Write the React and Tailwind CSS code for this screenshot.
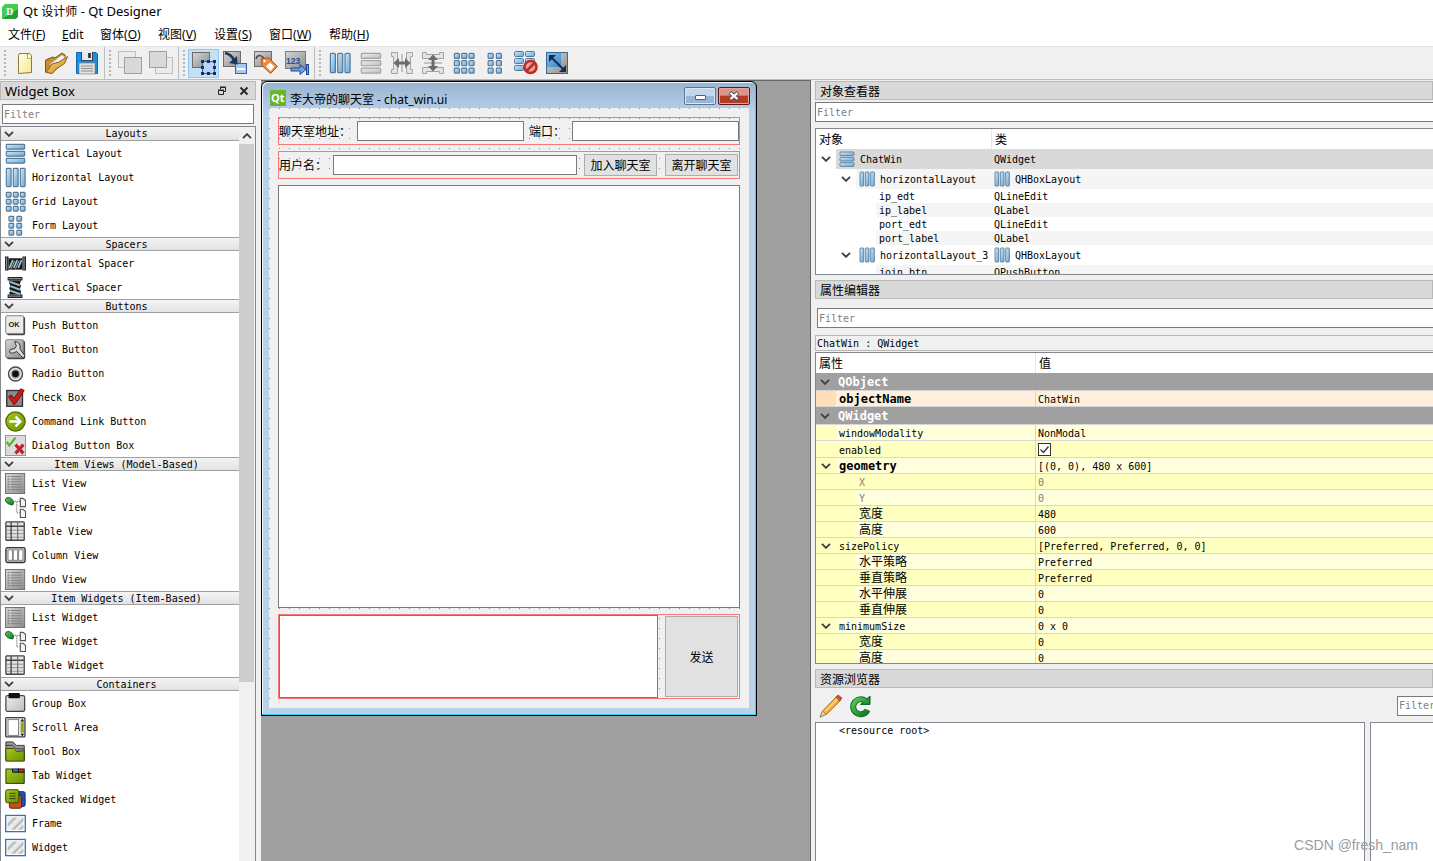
import React from 'react';

const MONO = 'font-["DejaVu_Sans_Mono","Noto_Sans_CJK_SC",monospace] text-[10px]';
const UI = 'font-["Noto_Sans","Noto_Sans_CJK_SC",sans-serif] text-[12px]';
const SONG = 'font-["Noto_Sans_CJK_SC",sans-serif] text-[12px]';

// Shared gradients, referenced by id from every icon
function Gradients() {
  const list = [
    ['gBlue', '#cdecfc', '#64a6d8'],
    ['gGray', '#eeeeee', '#bdbdbd'],
    ['gDark', '#d6d6d6', '#8c8c8c'],
    ['gYellow', '#fffef0', '#f6e88c'],
    ['gGold', '#fbd277', '#cf8f1e'],
    ['gGreen', '#a4c81c', '#6d9000'],
    ['gLeaf', '#5cc860', '#0d7a22'],
    ['gSky', '#7fc0ea', '#3f86c4'],
  ];
  return (
    <svg className="absolute size-0" aria-hidden="true">
      <defs>
        {list.map(([id, a, b]) => (
          <linearGradient key={id} id={id} x1="0" y1="0" x2="1" y2="1">
            <stop offset="0" stopColor={a} />
            <stop offset="1" stopColor={b} />
          </linearGradient>
        ))}
      </defs>
    </svg>
  );
}

function Svg({ className = 'size-6', children }) {
  return (
    <svg viewBox="0 0 24 24" className={`${className} shrink-0`} fill="none" aria-hidden="true">
      {children}
    </svg>
  );
}

/* ---------- layout icons ---------- */

const STEEL = '#5a7896';

function RowsIcon({ className, fill = 'url(#gBlue)', stroke = STEEL }) {
  return (
    <Svg className={className}>
      {[1, 9, 17].map((y) => (
        <rect key={y} x="1.500" y={y + 0.5} width="21" height="5.500" rx="1" fill={fill} stroke={stroke} strokeWidth="1.300" />
      ))}
    </Svg>
  );
}

function ColsIcon({ className }) {
  return (
    <Svg className={className}>
      {[1, 9, 17].map((x) => (
        <rect key={x} x={x + 0.5} y="1.500" width="5.500" height="21" rx="1" fill="url(#gBlue)" stroke={STEEL} strokeWidth="1.300" />
      ))}
    </Svg>
  );
}

function CellsIcon({ className, cols }) {
  return (
    <Svg className={className}>
      {cols.map((x) =>
        [1, 9, 17].map((y) => (
          <rect key={`${x}-${y}`} x={x + 0.5} y={y + 0.5} width="5.500" height="5.500" rx="1" fill="url(#gBlue)" stroke={STEEL} strokeWidth="1.300" />
        ))
      )}
    </Svg>
  );
}

const GridIcon = ({ className }) => <CellsIcon className={className} cols={[1, 9, 17]} />;
const FormIcon = ({ className }) => <CellsIcon className={className} cols={[4, 13]} />;

/* ---------- toolbar icons ---------- */

function NewIcon() {
  return (
    <Svg>
      <path d="M7 2.500h9.500L18.500 4.500V21.500L5.500 22.500V4.500Q5.500 2.500 7 2.500Z" fill="url(#gYellow)" stroke="#8a7a3c" />
      <path d="M14.500 3v4.500h4" fill="#fff" stroke="#b8a85a" />
    </Svg>
  );
}

function OpenIcon() {
  return (
    <Svg>
      <path d="M1.500 21V9L9 6l2 1 7-5 3 2v6L8 22Z" fill="#c98f2a" stroke="#7a5411" />
      <path d="M6 13 18 4l3 2-1 4-11 8Z" fill="#f4f4f4" stroke="#a7a7a7" strokeWidth=".6" />
      <path d="M2 21.500 8 13l7-2 8.500-5.500-3 7-9 6-3 4Z" fill="url(#gGold)" stroke="#8a6114" />
    </Svg>
  );
}

function SaveIcon() {
  return (
    <Svg>
      <path d="M1.500 1.500H21L22.500 3V22.500H1.500Z" fill="#1b91e4" stroke="#0c68b4" />
      <rect x="6" y="1" width="12" height="9" fill="#3c4350" />
      <rect x="7" y="1" width="10" height="8" fill="#e8e8e8" />
      <rect x="13" y="2" width="3" height="5" fill="#3c4350" />
      <rect x="4" y="12" width="16" height="11" fill="#e0e0e0" stroke="#777" strokeWidth=".6" />
      <path d="M6 15h12M6 17.500h12M6 20h12" stroke="#8f8f8f" />
    </Svg>
  );
}

function RaiseIcon({ back }) {
  return (
    <Svg>
      <rect x={back ? 6.5 : 0.5} y={back ? 6.5 : 0.5} width="17" height="16" fill="#ececec" stroke="#bdbdbd" />
      <rect x={back ? 0.5 : 6.5} y={back ? 0.5 : 6.5} width="17" height="16" fill="#d9d9d9" stroke="#9f9f9f" />
    </Svg>
  );
}

function EditWidgetsIcon() {
  return (
    <Svg>
      <rect x=".5" y="1.500" width="17" height="15" fill="url(#gDark)" stroke="#6d6d6d" />
      <rect x="10.500" y="10.500" width="12" height="12" fill="#b9d2f8" stroke="#3f5f96" />
      <path d="M9 9h3v3H9zM15 9h3v3h-3zM21 9h3v3h-3zM9 15h3v3H9zM21 15h3v3h-3zM9 21h3v3H9zM15 21h3v3h-3zM21 21h3v3h-3z" fill="#16315f" />
    </Svg>
  );
}

function EditSignalsIcon() {
  return (
    <Svg>
      <rect x=".5" y=".5" width="17" height="15" fill="url(#gDark)" stroke="#6d6d6d" />
      <rect x="12.500" y="12.500" width="11" height="10" fill="#a9c8f4" stroke="#3d649e" />
      <path d="M14 17h8v2h-8z" fill="#fff" />
      <path d="M2 2c5 1 7 3 9 7" stroke="#17375f" strokeWidth="2.600" />
      <path d="M6 12 14.500 13.500 14 5Z" fill="#17375f" />
    </Svg>
  );
}

function EditBuddiesIcon() {
  return (
    <Svg>
      <rect x=".5" y=".5" width="17" height="15" fill="url(#gDark)" stroke="#6d6d6d" />
      <path d="M2 8c1-4 4-5 8-1" stroke="#4b4b4b" strokeWidth="1.500" />
      <path d="M7.500 7.500 15 7 23.500 15.500 16.500 22.500 8 14.500Z" fill="#f08a3c" stroke="#b4501a" />
      <path d="M16 11.500 20.500 15.500 16.500 20 12 15.500Z" fill="#fff" />
      <circle cx="10.500" cy="10" r="1.200" fill="#fff" />
    </Svg>
  );
}

function TabOrderIcon() {
  return (
    <Svg>
      <rect x=".5" y=".5" width="20" height="17" fill="url(#gDark)" stroke="#7d7d7d" />
      <text x="1" y="13" fontSize="8.500" fontWeight="bold" fontFamily="Liberation Sans, sans-serif" fill="#1d4f9c">123</text>
      <path d="M6 17h9v-3.500l6 5-6 5V20H6Z" fill="#6fa0e8" stroke="#1d4a94" />
      <rect x="21.500" y="13.500" width="2" height="10" fill="#6fa0e8" stroke="#1d4a94" />
    </Svg>
  );
}

function SplitHIcon() {
  return (
    <Svg>
      <path d="M1.500 1.500h6v21h-6v-4h2v-13h-2ZM22.500 1.500h-6v21h6v-4h-2v-13h2Z" fill="#e4e4e4" stroke="#a3a3a3" />
      <path d="M12 3v18" stroke="#b4b4b4" strokeWidth="1.500" />
      <path d="M3.500 12 9 7v3.500h6V7l5.500 5-5.500 5v-3.500H9V17Z" fill="#6b6b6b" />
    </Svg>
  );
}

function SplitVIcon() {
  return (
    <Svg>
      <path d="M1.500 1.500v6h21v-6h-4v2h-13v-2ZM1.500 22.500v-6h21v6h-4v-2h-13v2Z" fill="#e4e4e4" stroke="#a3a3a3" />
      <path d="M3 12h18" stroke="#b4b4b4" strokeWidth="1.500" />
      <path d="M12 3.500 7 9h3.500v6H7l5 5.500 5-5.500h-3.500V9H17Z" fill="#6b6b6b" />
    </Svg>
  );
}

function BreakIcon() {
  return (
    <Svg>
      {[0, 7, 14].map((y) => (
        <g key={y} fill="url(#gBlue)" stroke={STEEL}>
          <rect x=".5" y={y + 0.5} width="9" height="5" rx="1" />
          <rect x="11.500" y={y + 0.5} width="9" height="5" rx="1" />
        </g>
      ))}
      <circle cx="16.500" cy="16" r="6" fill="#e9a49c" stroke="#c22c22" strokeWidth="2.600" />
      <path d="m12.500 20 8-8" stroke="#c22c22" strokeWidth="2.600" />
    </Svg>
  );
}

function AdjustIcon() {
  return (
    <Svg>
      <rect x="1.500" y="1.500" width="21" height="21" fill="url(#gDark)" stroke="#3a6894" />
      <path d="M2 2h14v14H2z" fill="url(#gSky)" />
      <path d="M6 6 18 18" stroke="#112f55" strokeWidth="2" />
      <path d="M4 4h7l-7 7ZM21 21h-7l7-7Z" fill="#112f55" />
    </Svg>
  );
}

/* ---------- widget box icons ---------- */

function HSpacerIcon({ className }) {
  return (
    <Svg className={className}>
      <rect x="4" y="6" width="16" height="13" fill="#1b1b1b" />
      <rect x="0" y="4" width="4" height="16" fill="#222" />
      <rect x="20" y="4" width="4" height="16" fill="#222" />
      <path d="M1 5h1.500v14H1zM21 5h1.500v14H21z" fill="#8d8d8d" />
      <path d="M5 17 9 8M10 17l4-9M15 17l4-9" stroke="#9fc3d8" strokeWidth="2" />
      <path d="M7 18l4-9M12 18l4-9" stroke="#e8f2f8" strokeWidth=".8" />
    </Svg>
  );
}

function VSpacerIcon({ className }) {
  return (
    <Svg className={className}>
      <rect x="5" y="4" width="13" height="16" fill="#1b1b1b" />
      <rect x="3" y="0" width="17" height="4" fill="#222" />
      <rect x="3" y="20" width="17" height="4" fill="#222" />
      <path d="M4 1h15v1.500H4zM4 21h15v1.500H4z" fill="#8d8d8d" />
      <path d="M6 5.500l11 4M6 10.500l11 4M6 15.500l11 4" stroke="#9fc3d8" strokeWidth="2" />
      <path d="M5 8v4M18 6v3M5 14v3M18 12v3" stroke="#fff" strokeWidth="1.200" />
    </Svg>
  );
}

function Tile({ dark }) {
  return (
    <>
      <rect x="2" y="2" width="21" height="21" rx="2" fill="#444" />
      <rect x=".8" y=".8" width="20.500" height="20.500" rx="1.500" fill={dark ? 'url(#gDark)' : '#ebebeb'} stroke="#777" />
    </>
  );
}

function PushIcon({ className }) {
  return (
    <Svg className={className}>
      <Tile />
      <text x="4" y="14" fontSize="8.500" fontFamily="Liberation Sans, sans-serif" fontWeight="bold" fill="#222">OK</text>
    </Svg>
  );
}

function ToolIcon({ className }) {
  return (
    <Svg className={className}>
      <Tile dark />
      <path d="M5 15c3 2 6 1 8-1l8 8 1.500-3-5.500-8c1-4-1-8-6-8l2 5-2 3-5 1Z" fill="#d9d9d9" stroke="#222" />
    </Svg>
  );
}

function RadioIcon({ className }) {
  return (
    <Svg className={className}>
      <circle cx="12" cy="12.500" r="8" fill="#e6e6e6" stroke="#4b4b4b" strokeWidth="1.600" />
      <circle cx="12" cy="12.500" r="5.500" fill="#a6a6a6" />
      <circle cx="12" cy="12.500" r="3.800" fill="#111" />
    </Svg>
  );
}

function CheckIcon({ className }) {
  return (
    <Svg className={className}>
      <rect x="2" y="4" width="18" height="18" fill="#8b8b8b" stroke="#2f2f2f" strokeWidth="1.500" />
      <path d="M4 11 7 9l3.500 4L18 2l4 2-10 15-2 1Z" fill="#d01818" stroke="#6a0606" />
    </Svg>
  );
}

function CommandIcon({ className }) {
  return (
    <Svg className={className}>
      <circle cx="12" cy="12" r="11" fill="url(#gGreen)" stroke="#4f6a00" strokeWidth="1.500" />
      <path d="M5 12h12M12 6.500 17.500 12 12 17.500" stroke="#fff" strokeWidth="2.800" />
    </Svg>
  );
}

function DialogIcon({ className }) {
  return (
    <Svg className={className}>
      <rect x=".5" y=".5" width="23" height="23" fill="#dcdcdc" stroke="#8c8c8c" />
      <path d="m2 8 3 4 7-9" stroke="#55b42c" strokeWidth="2.500" />
      <path d="m12 11 9 10M21 11l-9 10" stroke="#c3202a" strokeWidth="3.600" />
    </Svg>
  );
}

function ListIcon({ className }) {
  return (
    <Svg className={className}>
      <rect x=".5" y=".5" width="22" height="23" fill="url(#gDark)" stroke="#666" />
      <path d="M7 4h12M7 7h12M7 10h12M7 13h12M7 16h12M7 19h12" stroke="#7a7a7a" />
      <path d="M3 4h2M3 7h2M3 10h2M3 13h2M3 16h2M3 19h2" stroke="#666" />
    </Svg>
  );
}

function TreeIcon({ className }) {
  return (
    <Svg className={className}>
      <path d="M0 3c2-4 8-3 10 3l-1 3C5 9 1 7 0 3Z" fill="url(#gLeaf)" stroke="#115c1c" />
      <path d="M11 5h6M13.500 6v12h3" stroke="#333" strokeDasharray="1.200 1.200" />
      <path d="M17.500 1.500h3l3 2.500v7h-6ZM17.500 14h3l3 2.500v7h-6Z" fill="#f4f4f4" stroke="#555" strokeWidth="1.300" />
    </Svg>
  );
}

function TableIcon({ className }) {
  return (
    <Svg className={className}>
      <rect x="1" y="1" width="21" height="21" rx="1" fill="#e2e2e2" stroke="#444" strokeWidth="1.500" />
      <path d="M1 10.500h21M1 14.500h21M1 18.500h21" stroke="#8a8a8a" />
      <path d="M1 6h21M7 1v21" stroke="#444" strokeWidth="1.500" />
      <path d="M14.500 1v21" stroke="#666" strokeWidth="1.200" />
    </Svg>
  );
}

function ColumnIcon({ className }) {
  return (
    <Svg className={className}>
      <rect x="1" y="3" width="22" height="17" rx="2" fill="#cfcfcf" stroke="#333" strokeWidth="1.500" />
      <path d="M3.500 5.500h5v12h-5zM9.500 5.500h5v12h-5zM15.500 5.500h5v12h-5z" fill="#fff" stroke="#777" />
    </Svg>
  );
}

function GroupIcon({ className }) {
  return (
    <Svg className={className}>
      <rect x="1" y="3" width="21.500" height="18" rx="2" fill="url(#gGray)" stroke="#444" strokeWidth="1.400" />
      <rect x="4" y="0" width="13" height="6" rx="1" fill="#111" />
    </Svg>
  );
}

function ScrollAreaIcon({ className }) {
  return (
    <Svg className={className}>
      <rect x=".8" y=".8" width="22" height="22" rx="1" fill="#e2e2e2" stroke="#3f3f3f" strokeWidth="1.500" />
      <rect x="3.500" y="3" width="12" height="18" fill="#fff" stroke="#777" />
      <rect x="18" y="6" width="3.500" height="12" fill="#86ab10" />
      <path d="m19.800 2 2 3h-4ZM19.800 22l2-3h-4Z" fill="#111" />
    </Svg>
  );
}

function ToolBoxIcon({ className }) {
  return (
    <Svg className={className}>
      <path d="M1 1h8l4 4h9v17H1Z" fill="#999" stroke="#2d2d2d" />
      <path d="M1 5h8l4 4h9" stroke="#333" />
      <path d="M1 8.500h9l3.500 3.500 8.500-1v12H1Z" fill="url(#gGreen)" stroke="#2c3a00" />
    </Svg>
  );
}

function TabIcon({ className }) {
  return (
    <Svg className={className}>
      <path d="M1 4.500h7l2 3.500h12v13H1Z" fill="url(#gGreen)" stroke="#1c2600" />
      <rect x="8.500" y="4.500" width="7" height="3.500" fill="#1c79d8" stroke="#111" />
      <rect x="15.500" y="4.500" width="6.500" height="3.500" fill="#e0261c" stroke="#111" />
    </Svg>
  );
}

function StackedIcon({ className }) {
  return (
    <Svg className={className}>
      <rect x="11" y="3" width="12" height="17" rx="2" fill="#1f52c0" stroke="#0a1c4c" />
      <rect x="5" y="7" width="14" height="15" rx="2" fill="#c8501c" stroke="#4a1800" />
      <rect x=".8" y=".8" width="15" height="15" rx="2" fill="url(#gGreen)" stroke="#2c3a00" />
      <path d="M5 5h7M5 8h7M5 11h7" stroke="#26350a" />
    </Svg>
  );
}

function FrameIcon({ className }) {
  return (
    <Svg className={className}>
      <rect x=".8" y="2.800" width="22.400" height="18.500" fill="#fff" stroke="#2f74c0" strokeWidth="1.500" />
      <path d="M3 5h18v14H3z" fill="#e9e9e9" />
      <path d="m3 12 7-7h4L3 16ZM7 19 21 5v4L11 19ZM15 19l6-6v4l-2 2Z" fill="#bcbcbc" />
    </Svg>
  );
}

function Chevron({ className = '' }) {
  return (
    <svg viewBox="0 0 10 6" className={`h-[6px] w-[10px] shrink-0 ${className}`} fill="none" aria-hidden="true">
      <path d="m1 .8 4 4 4-4" stroke="#404040" strokeWidth="1.900" />
    </svg>
  );
}

/* ---------- top of the window ---------- */

const menus = [
  ['文件', 'F', 'w-[54px]'],
  ['', 'Edit', 'w-[38px]'],
  ['窗体', 'O', 'w-[58px]'],
  ['视图', 'V', 'w-[56px]'],
  ['设置', 'S', 'w-[55px]'],
  ['窗口', 'W', 'w-[60px]'],
  ['帮助', 'H', 'w-[60px]'],
];

function MenuBar() {
  return (
    <nav className="flex h-[23px] shrink-0 items-center bg-white pl-2">
      {menus.map(([label, key, width]) => (
        <button key={label + key} type="button" className={`${width} text-left whitespace-nowrap`}>
          {label ? (
            <>{label}(<u>{key}</u>)</>
          ) : (
            <><u>E</u>dit</>
          )}
        </button>
      ))}
    </nav>
  );
}

const toolGroups = [
  [['New', <NewIcon />], ['Open', <OpenIcon />], ['Save', <SaveIcon />]],
  [['Bring to front', <RaiseIcon />], ['Send to back', <RaiseIcon back />]],
  [
    ['Edit widgets', <EditWidgetsIcon />],
    ['Edit signals', <EditSignalsIcon />],
    ['Edit buddies', <EditBuddiesIcon />],
    ['Edit tab order', <TabOrderIcon />],
  ],
  [
    ['Lay out horizontally', <ColsIcon className="size-[22px]" />],
    ['Lay out vertically', <RowsIcon className="size-[22px]" fill="url(#gGray)" stroke="#a3a3a3" />],
    ['Splitter horizontal', <SplitHIcon />],
    ['Splitter vertical', <SplitVIcon />],
    ['Lay out in a grid', <GridIcon className="size-[22px]" />],
    ['Lay out in a form', <FormIcon className="size-[22px]" />],
    ['Break layout', <BreakIcon />],
    ['Adjust size', <AdjustIcon />],
  ],
];

function ToolBar() {
  return (
    <div className="flex h-[34px] shrink-0 border-t border-b border-t-[#e6e6e6] border-b-[#bdbdbd] bg-[#f0f0f0]">
      {toolGroups.map((group, i) => (
        <div key={i} className={`flex items-center pr-[2px] ${i < 3 ? 'border-r border-[#bdbdbd]' : ''}`}>
          <div className="ml-1 mr-[3px] h-[26px] w-[2px] bg-[repeating-linear-gradient(#b4b4b4_0_2px,transparent_2px_4px)]" />
          {group.map(([label, icon]) => (
            <button
              key={label}
              type="button"
              aria-label={label}
              className={`flex h-[29px] w-[31px] items-center justify-center border ${
                label === 'Edit widgets' ? 'border-[#90c8f6] bg-[#c4e0f7]' : 'border-transparent'
              }`}
            >
              {icon}
            </button>
          ))}
        </div>
      ))}
    </div>
  );
}

function DockTitle({ children, buttons }) {
  return (
    <div className="flex h-[19px] shrink-0 items-center border border-[#b9b9b9] bg-[#d9d9d9] pl-1">
      <h2 className="pt-[2px] leading-[15px]">{children}</h2>
      {buttons}
    </div>
  );
}

function FilterInput({ label, className = '' }) {
  return (
    <input
      type="text"
      aria-label={label}
      placeholder="Filter"
      className={`h-5 shrink-0 border border-[#7a7a7a] bg-white pl-px placeholder:text-[#7f7f7f] ${MONO} ${className}`}
    />
  );
}

/* ---------- widget box ---------- */

const widgetGroups = [
  ['Layouts', [['Vertical Layout', RowsIcon], ['Horizontal Layout', ColsIcon], ['Grid Layout', GridIcon], ['Form Layout', FormIcon]]],
  ['Spacers', [['Horizontal Spacer', HSpacerIcon], ['Vertical Spacer', VSpacerIcon]]],
  ['Buttons', [
    ['Push Button', PushIcon],
    ['Tool Button', ToolIcon],
    ['Radio Button', RadioIcon],
    ['Check Box', CheckIcon],
    ['Command Link Button', CommandIcon],
    ['Dialog Button Box', DialogIcon],
  ]],
  ['Item Views (Model-Based)', [
    ['List View', ListIcon],
    ['Tree View', TreeIcon],
    ['Table View', TableIcon],
    ['Column View', ColumnIcon],
    ['Undo View', ListIcon],
  ]],
  ['Item Widgets (Item-Based)', [['List Widget', ListIcon], ['Tree Widget', TreeIcon], ['Table Widget', TableIcon]]],
  ['Containers', [
    ['Group Box', GroupIcon],
    ['Scroll Area', ScrollAreaIcon],
    ['Tool Box', ToolBoxIcon],
    ['Tab Widget', TabIcon],
    ['Stacked Widget', StackedIcon],
    ['Frame', FrameIcon],
    ['Widget', FrameIcon],
  ]],
];

function WidgetBox() {
  return (
    <aside className="flex w-64 shrink-0 flex-col pt-px">
      <DockTitle
        buttons={
          <div className="ml-auto flex gap-3 pr-[6px]">
            <button type="button" aria-label="Float">
              <svg viewBox="0 0 10 10" className="size-[10px]" fill="none" stroke="#222">
                <path d="M3.500 3V1.500h5v4H7" />
                <path d="M1.500 4.500h5v4h-5z" />
                <path d="M3 1h6M1 4h6" />
              </svg>
            </button>
            <button type="button" aria-label="Close">
              <svg viewBox="0 0 10 10" className="size-[10px]" fill="none" stroke="#222" strokeWidth="1.800">
                <path d="m1.500 1.500 7 7M8.500 1.500l-7 7" />
              </svg>
            </button>
          </div>
        }
      >
        <span className="text-[13px]">Widget Box</span>
      </DockTitle>
      <FilterInput label="Filter widgets" className="mx-[2px] mt-1" />
      <div className="mt-[2px] flex min-h-0 flex-1 border border-b-0 border-[#828790] bg-white">
        <div className="min-w-0 flex-1 overflow-hidden">
          {widgetGroups.map(([title, items], i) => (
            <section key={title}>
              <h3
                className={`flex h-[14px] items-center border-b border-[#a0a0a0] bg-linear-to-b from-[#f4f4f4] to-[#e2e2e2] pl-[3px] ${MONO} ${
                  i ? 'border-t' : ''
                }`}
              >
                <Chevron />
                <span className="flex-1 pt-px text-center leading-3">{title}</span>
              </h3>
              <ul>
                {items.map(([name, Icon]) => (
                  <li key={name} className={`flex h-6 items-center gap-[6px] pl-1 ${MONO}`}>
                    <Icon className="size-[21px]" />
                    {name}
                  </li>
                ))}
              </ul>
            </section>
          ))}
        </div>
        <div className="flex w-4 flex-col bg-[#f0f0f0] pr-px">
          <button type="button" aria-label="Scroll up" className="flex h-[17px] shrink-0 items-center justify-center">
            <Chevron className="rotate-180" />
          </button>
          <div className="flex-3 bg-[#cdcdcd]" />
          <div className="flex-1" />
        </div>
      </div>
    </aside>
  );
}

/* ---------- form window ---------- */

const RED = 'border border-[#f87878]';
const FIELD = 'h-5 min-w-0 border border-[#7a7a7a] bg-white px-1';
const PUSH = 'w-[73px] border border-[#adadad] bg-[#e1e1e1] text-center';

function FormWindow() {
  return (
    <section className="flex w-[496px] flex-col rounded-t-md border border-black bg-linear-to-b from-[#99b4d1] via-[#b9d1ea] via-[5%] to-[#b9d1ea] px-[6px] pb-[7px] shadow-[inset_-1px_-1px_0_#35d3ea,inset_1px_1px_0_#eef6fc]">
      <header className="flex h-[26px] items-start pt-[5px] pl-[2px]">
        <svg viewBox="0 0 16 16" className="mt-[3px] mr-1 size-4" aria-hidden="true">
          <rect width="16" height="16" rx="1" fill="#67b52f" />
          <text x="1" y="12" fontSize="11" fontWeight="bold" fontFamily="Open Sans, sans-serif" fill="#fff">Qt</text>
        </svg>
        <h1 className="mt-[5px] flex-1 leading-4">李大帝的聊天室 - chat_win.ui</h1>
        <div className="flex gap-[2px]">
          <button
            type="button"
            aria-label="Minimize"
            className="flex h-[18px] w-8 items-end justify-center rounded-[2px] border border-[#5a7697] bg-linear-to-b from-[#c3d6ea] from-50% to-[#9ab5d3] to-50% pb-1 shadow-[inset_0_0_0_1px_#dbe7f3]"
          >
            <span className="h-[5px] w-[11px] rounded-[1px] border border-[#525f70] bg-white" />
          </button>
          <button
            type="button"
            aria-label="Close form"
            className="flex h-[18px] w-8 items-center justify-center rounded-[2px] border border-[#5c1a1a] bg-linear-to-b from-[#dd9484] from-45% to-[#b83a24] to-50% shadow-[inset_0_0_0_1px_#e5a598]"
          >
            <svg viewBox="0 0 12 10" className="h-[10px] w-3" fill="none">
              <path d="m2 1.500 8 7M10 1.500l-8 7" stroke="#4d5263" strokeWidth="4" />
              <path d="m2.500 2 7 6M9.500 2l-7 6" stroke="#fff" strokeWidth="2.300" />
            </svg>
          </button>
        </div>
      </header>
      <form
        onSubmit={(e) => e.preventDefault()}
        className={`mx-px flex h-[600px] flex-col gap-[6px] bg-[#f0f0f0] bg-[linear-gradient(90deg,transparent_1px,#f0f0f0_1px),linear-gradient(#8c8c8c_1px,transparent_1px)] bg-size-[10px_10px] p-[9px] ${SONG}`}
      >
        <div className={`flex h-7 items-center ${RED}`}>
          <label htmlFor="ip_edt" className="w-[78px]">聊天室地址：</label>
          <input id="ip_edt" className={`flex-1 ${FIELD}`} />
          <label htmlFor="port_edt" className="w-12 pl-[5px]">端口：</label>
          <input id="port_edt" className={`flex-1 ${FIELD}`} />
        </div>
        <div className={`flex h-7 items-center pr-px ${RED}`}>
          <label htmlFor="user_edt" className="w-[54px]">用户名：</label>
          <input id="user_edt" className={`mr-[7px] flex-1 ${FIELD}`} />
          <button type="button" className={`mr-2 h-[22px] ${PUSH}`}>加入聊天室</button>
          <button type="button" className={`h-[22px] ${PUSH}`}>离开聊天室</button>
        </div>
        <textarea aria-label="聊天记录" className="min-h-0 flex-1 resize-none border border-[#7a7a7a] bg-white" />
        <div className={`flex h-[85px] gap-[7px] pr-px ${RED}`}>
          <textarea aria-label="消息" className="min-w-0 flex-1 resize-none border border-[#7a7a7a] bg-white" />
          <button type="submit" className={`my-px ${PUSH}`}>发送</button>
        </div>
      </form>
    </section>
  );
}

/* ---------- object inspector ---------- */

const objects = [
  { name: 'ChatWin', cls: 'QWidget', depth: 0, Icon: RowsIcon, bg: 'bg-[#d9d9d9]' },
  { name: 'horizontalLayout', cls: 'QHBoxLayout', depth: 1, Icon: ColsIcon, bg: 'bg-[#f5f5f5]' },
  { name: 'ip_edt', cls: 'QLineEdit', depth: 2 },
  { name: 'ip_label', cls: 'QLabel', depth: 2, bg: 'bg-[#f5f5f5]' },
  { name: 'port_edt', cls: 'QLineEdit', depth: 2 },
  { name: 'port_label', cls: 'QLabel', depth: 2, bg: 'bg-[#f5f5f5]' },
  { name: 'horizontalLayout_3', cls: 'QHBoxLayout', depth: 1, Icon: ColsIcon },
  { name: 'join_btn', cls: 'QPushButton', depth: 2, bg: 'bg-[#f5f5f5]' },
];

function ObjectInspector() {
  return (
    <div className="mt-[6px] h-[147px] shrink-0 overflow-hidden border border-r-0 border-[#828790] bg-white">
      <table className="w-full table-fixed border-separate border-spacing-0 text-left">
        <thead>
          <tr className={SONG}>
            <th className="h-5 w-44 border-r border-[#e5e5e5] p-0 pl-[3px] leading-4 font-normal">对象</th>
            <th className="h-5 p-0 pl-[3px] leading-4 font-normal">类</th>
          </tr>
        </thead>
        <tbody className={MONO}>
          {objects.map(({ name, cls, depth, Icon, bg = '' }) => (
            <tr key={name}>
              <td className="p-0">
                <div className={`flex items-stretch ${Icon ? 'h-5' : 'h-[14px]'}`}>
                  <span className={`flex items-center justify-end pr-[5px] ${['w-5', 'w-10', 'w-[60px]'][depth]}`}>
                    {Icon && <Chevron />}
                  </span>
                  <span className={`flex min-w-0 flex-1 items-center gap-[5px] pl-[3px] whitespace-nowrap ${bg}`}>
                    {Icon && <Icon className="size-4" />}
                    {name}
                  </span>
                </div>
              </td>
              <td className={`p-0 pl-[2px] ${bg}`}>
                <div className={`flex items-center gap-[5px] ${Icon ? 'h-5' : 'h-[14px]'}`}>
                  {depth === 1 && <Icon className="size-4" />}
                  {cls}
                </div>
              </td>
            </tr>
          ))}
        </tbody>
      </table>
    </div>
  );
}

/* ---------- property editor ---------- */

const properties = [
  { name: 'QObject', group: true },
  { name: 'objectName', value: 'ChatWin', bold: true, tone: 'orange' },
  { name: 'QWidget', group: true },
  { name: 'windowModality', value: 'NonModal' },
  { name: 'enabled', check: true },
  { name: 'geometry', value: '[(0, 0), 480 x 600]', bold: true, open: true },
  { name: 'X', value: '0', sub: true, muted: true },
  { name: 'Y', value: '0', sub: true, muted: true },
  { name: '宽度', value: '480', sub: true },
  { name: '高度', value: '600', sub: true },
  { name: 'sizePolicy', value: '[Preferred, Preferred, 0, 0]', open: true },
  { name: '水平策略', value: 'Preferred', sub: true },
  { name: '垂直策略', value: 'Preferred', sub: true },
  { name: '水平伸展', value: '0', sub: true },
  { name: '垂直伸展', value: '0', sub: true },
  { name: 'minimumSize', value: '0 x 0', open: true },
  { name: '宽度', value: '0', sub: true },
  { name: '高度', value: '0', sub: true },
];

function PropertyRow({ row, odd }) {
  if (row.group) {
    return (
      <tr>
        <th colSpan={2} className="h-[18px] border-b border-[#d6d6d6] bg-[#a0a0a0] p-0 text-left">
          <div className="flex items-center pl-1 text-[12px] leading-4 font-bold text-white">
            <Chevron className="mr-2" />
            {row.name}
          </div>
        </th>
      </tr>
    );
  }
  const light = row.tone ? 'bg-[#fff0de]' : odd ? 'bg-[#ffffdc]' : 'bg-[#ffffbf]';
  const deep = row.tone ? 'bg-[#ffdfb8]' : 'bg-[#ffffbf]';
  const cjk = /[^\x00-\x7f]/.test(row.name);
  return (
    <tr className={row.muted ? 'text-[#808080]' : ''}>
      <td className="border-r border-b border-[#d6d6d6] p-0">
        <div className={`flex items-stretch ${row.check ? 'h-4' : 'h-[15px]'}`}>
          <span className={`flex items-center pl-[5px] ${deep} ${row.sub ? 'w-10' : 'w-5'}`}>
            {row.open && <Chevron />}
          </span>
          <span
            className={`flex flex-1 items-center pt-[2px] pl-[3px] leading-[13px] ${light} ${cjk ? 'text-[12px]' : ''} ${
              row.bold ? 'text-[12px] font-bold' : ''
            }`}
          >
            {row.name}
          </span>
        </div>
      </td>
      <td className={`border-b border-[#d6d6d6] p-0 pl-[2px] leading-[13px] ${light} ${row.check ? '' : 'pt-[2px]'}`}>
        {row.check ? (
          <span className="relative block size-[13px]">
            <input
              type="checkbox"
              aria-label="enabled"
              defaultChecked
              className="peer block size-[13px] appearance-none border border-[#333] bg-white"
            />
            <svg viewBox="0 0 13 13" className="pointer-events-none absolute inset-0 hidden size-[13px] peer-checked:block" fill="none">
              <path d="m2.500 6.500 3 3 5-6" stroke="#333" strokeWidth="1.300" />
            </svg>
          </span>
        ) : (
          row.value
        )}
      </td>
    </tr>
  );
}

function PropertyEditor() {
  return (
    <div className="mt-px h-[312px] shrink-0 overflow-hidden border border-r-0 border-[#828790] bg-white">
      <table className="w-full table-fixed border-separate border-spacing-0 text-left">
        <thead>
          <tr className={SONG}>
            <th className="h-5 w-[220px] border-r border-[#e5e5e5] p-0 pl-[3px] leading-4 font-normal">属性</th>
            <th className="h-5 p-0 pl-[3px] leading-4 font-normal">值</th>
          </tr>
        </thead>
        <tbody className={MONO}>
          {properties.map((row, i) => (
            <PropertyRow key={i} row={row} odd={i % 2 === 1} />
          ))}
        </tbody>
      </table>
    </div>
  );
}

/* ---------- resource browser ---------- */

function ResourceBrowser() {
  return (
    <>
      <div className="flex h-[34px] shrink-0 items-center pt-px pl-1">
        <button type="button" aria-label="Edit resources">
          <Svg>
            <path d="m1 23 3-6.500L18 2l4 4L8 20Z" fill="#f0ad3c" stroke="#9a6a1c" strokeWidth=".8" />
            <path d="m1 23 2.500-6 3.500 3.500Z" fill="#e9d6b0" stroke="#8b7a5c" strokeWidth=".8" />
            <path d="m17 3 2-2 4 3-2.500 3Z" fill="#c25a48" stroke="#93402f" strokeWidth=".8" />
            <path d="M6 17.500 18.500 5" stroke="#fbd98c" strokeWidth="1.500" />
          </Svg>
        </button>
        <button type="button" aria-label="Reload" className="ml-[5px]">
          <Svg>
            <path d="M19.500 16a7.500 7.500 0 1 1-2-9" stroke="#0e6f1e" strokeWidth="6" />
            <path d="M12.500 10.500h9.500V2Z" fill="#0e6f1e" stroke="#0e6f1e" />
            <path d="M19.500 16a7.500 7.500 0 1 1-2-9" stroke="url(#gLeaf)" strokeWidth="4" />
            <path d="M14.500 9.500h6.500V4Z" fill="#2c9c3a" />
          </Svg>
        </button>
        <FilterInput label="Filter resources" className="ml-auto w-9 border-r-0" />
      </div>
      <div className="flex min-h-0 flex-1 gap-[5px]">
        <div className={`flex-1 border border-b-0 border-[#828790] bg-white pt-px pl-[23px] leading-[14px] ${MONO}`}>
          &lt;resource root&gt;
        </div>
        <div className="w-[63px] border border-r-0 border-b-0 border-[#828790] bg-white" />
      </div>
    </>
  );
}

export default function App() {
  return (
    <div className={`relative flex h-screen flex-col overflow-hidden bg-[#f0f0f0] text-black ${UI}`}>
      <Gradients />
      <div className="flex h-[23px] shrink-0 items-center bg-white pl-[2px]">
        <svg viewBox="0 0 16 16" className="mr-[5px] size-4" aria-hidden="true">
          <path d="M3 0h13v13l-3 2H0V3Z" fill="#41cd52" />
          <path d="m0 15 16-10v8l-3 2Z" fill="#21a038" />
          <text x="4" y="11" fontSize="10" fontWeight="bold" fontFamily="Liberation Serif, serif" fill="#fff">D</text>
        </svg>
        <span className="text-[13px]">
          Qt <span className="text-[12px]">设计师</span> - Qt Designer
        </span>
      </div>
      <MenuBar />
      <ToolBar />
      <main className="flex min-h-0 flex-1">
        <WidgetBox />
        <div className="ml-[5px] min-w-0 flex-1 overflow-hidden border-t border-r border-[#696969] bg-[#a0a0a0]">
          <FormWindow />
        </div>
        <aside className="flex w-[622px] shrink-0 flex-col pt-px pl-1">
          <DockTitle>对象查看器</DockTitle>
          <FilterInput label="Filter objects" className="mt-[2px] border-r-0" />
          <ObjectInspector />
          <div className="h-[5px] shrink-0" />
          <DockTitle>属性编辑器</DockTitle>
          <FilterInput label="Filter properties" className="mt-[9px] ml-[2px] border-r-0" />
          <div className={`mt-[7px] h-4 shrink-0 border border-r-0 border-[#b9b9b9] pl-px leading-[15px] ${MONO}`}>
            ChatWin : QWidget
          </div>
          <PropertyEditor />
          <div className="h-[5px] shrink-0" />
          <DockTitle>资源浏览器</DockTitle>
          <ResourceBrowser />
        </aside>
      </main>
      <p className='absolute right-[15px] bottom-[6px] font-["Liberation_Sans",sans-serif] text-[14px] leading-5 text-[#9c9c9c]'>
        CSDN @fresh_nam
      </p>
    </div>
  );
}
